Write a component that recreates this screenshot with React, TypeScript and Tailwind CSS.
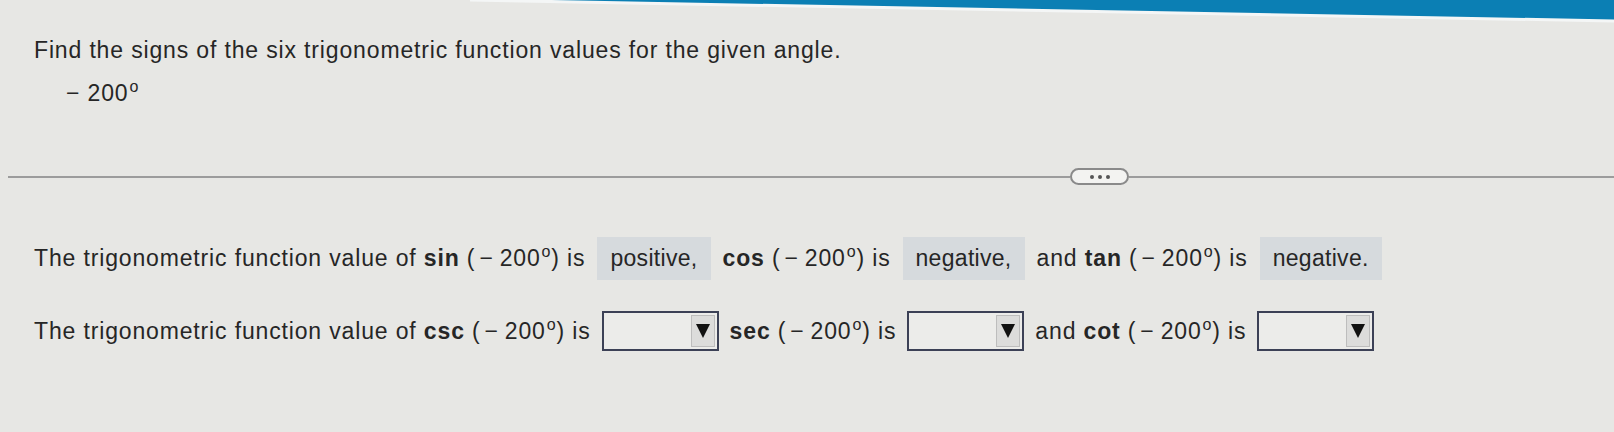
import React from "react";

const Deg = () => <span className="relative -top-[9px] text-[16px] ml-[1px]">o</span>;

const Arg = () => (
  <span className="whitespace-pre">
    {" ("}
    <span className="ml-[4px]">−</span>
    <span className="ml-[6px]">200</span>
    <Deg />
    {")"}
  </span>
);

const Fn = ({ name }: { name: string }) => (
  <span className="inline-flex items-baseline whitespace-pre">
    <span className="font-bold">{name}</span>
    <Arg />
  </span>
);

const Chip = ({ children }: { children: React.ReactNode }) => (
  <span className="mx-[12px] flex h-[43px] items-center bg-[#d6dadd] px-[13px] tracking-[0.3px]">{children}</span>
);

const Drop = () => (
  <span className="mx-[11px] flex h-[40px] w-[117px] items-stretch border-2 border-[#3c4156] bg-[#ececea]">
    <span className="flex-1" />
    <span className="my-[2px] mr-[2px] flex w-[24px] items-center justify-center border border-[#bdbdbd] bg-[#dcdcdb]">
      <svg width="14" height="16" viewBox="0 0 14 16">
        <polygon points="0,1 14,1 7,15" fill="#111" />
      </svg>
    </span>
  </span>
);

export default function App() {
  return (
    <div className="relative h-[432px] w-full overflow-hidden bg-[#e7e7e4] font-['Liberation_Sans',Arial,sans-serif] text-[23px] tracking-[0.85px] text-[#262626]">
      <svg className="absolute left-0 top-0" width="1614" height="24" viewBox="0 0 1614 24">
        <polygon points="470,0 1614,0 1614,21" fill="#0b7fb4" />
        <polyline points="470,0 1614,21" stroke="#f4f6f6" strokeWidth="3" fill="none" />
      </svg>

      <div className="pl-[34px] pt-[37px] leading-[26px]">
        Find the signs of the six trigonometric function values for the given angle.
      </div>
      <div className="pl-[66px] pt-[17px] leading-[26px] whitespace-pre">
        − 200<Deg />
      </div>

      <div className="mt-[59px] flex items-center pl-[8px]">
        <div className="h-[2px] flex-1 bg-[#9c9c9c]" />
        <div className="flex h-[17px] w-[59px] items-center justify-center gap-[4px] rounded-full border-2 border-[#8a8a8a] bg-[#f3f3f1]">
          <span className="h-[4px] w-[4px] rounded-full bg-[#555]" />
          <span className="h-[4px] w-[4px] rounded-full bg-[#555]" />
          <span className="h-[4px] w-[4px] rounded-full bg-[#555]" />
        </div>
        <div className="h-[2px] w-[485px] bg-[#9c9c9c]" />
      </div>

      <div className="mt-[50px] flex h-[46px] items-center pl-[34px]">
        <span className="whitespace-pre">The trigonometric function value of </span>
        <Fn name="sin" />
        <span>&nbsp;is</span>
        <Chip>positive,</Chip>
        <Fn name="cos" />
        <span>&nbsp;is</span>
        <Chip>negative,</Chip>
        <span className="whitespace-pre">and </span>
        <Fn name="tan" />
        <span>&nbsp;is</span>
        <Chip>negative.</Chip>
      </div>

      <div className="mt-[28px] flex h-[44px] items-center pl-[34px]">
        <span className="whitespace-pre">The trigonometric function value of </span>
        <Fn name="csc" />
        <span>&nbsp;is</span>
        <Drop />
        <Fn name="sec" />
        <span>&nbsp;is</span>
        <Drop />
        <span className="whitespace-pre">and </span>
        <Fn name="cot" />
        <span>&nbsp;is</span>
        <Drop />
      </div>
    </div>
  );
}
